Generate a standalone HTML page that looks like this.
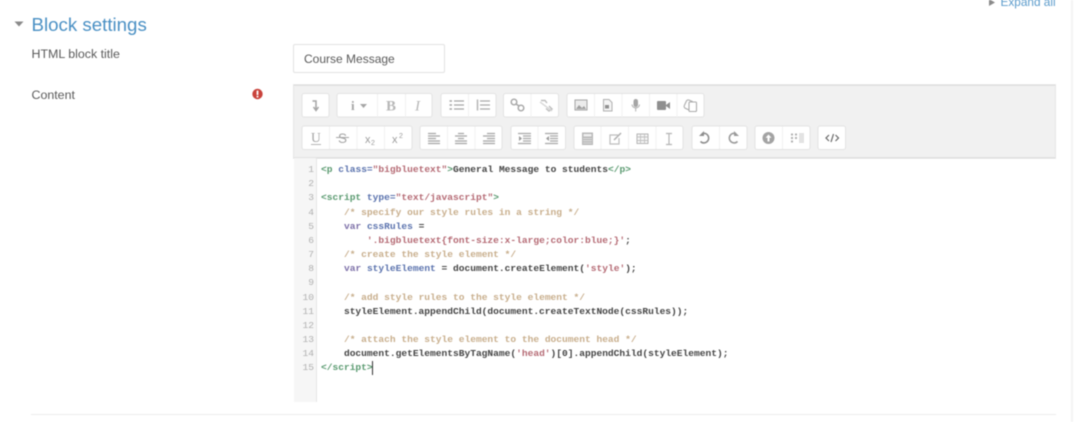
<!DOCTYPE html>
<html>
<head>
<meta charset="utf-8">
<style>
html,body{margin:0;padding:0;background:#fff}
body{width:1080px;height:422px;position:relative;overflow:hidden;font-family:"Liberation Sans",sans-serif;filter:blur(.5px)}
.a{position:absolute;white-space:pre}
.code{position:absolute;left:321px;top:163px;font:bold 9.57px/14.17px "Liberation Mono",monospace;color:#444;white-space:pre}
.nums{position:absolute;left:294px;top:163px;width:20px;text-align:right;font:9.57px/14.17px "Liberation Mono",monospace;color:#b0b0b0;white-space:pre}
.t{color:#5a9a70}.at{color:#5a72ad}.s{color:#b56a74}.c{color:#c8ae8c}.k{color:#7d70a8}.v{color:#5a72ad}
</style>
</head>
<body>
<div class="a" style="left:1071px;top:0;width:2px;height:422px;background:#f3f3f3"></div>

<svg class="a" style="left:14px;top:20.500px" width="11" height="6"><path d="M0.5 0.5H9.5L5 5.5Z" fill="#8a8a8a"/></svg>
<div class="a" style="left:31.5px;top:12.500px;font-size:18.700px;line-height:24px;color:#4a90c4">Block settings</div>
<div class="a" style="left:31.5px;top:45.500px;font-size:12.400px;line-height:17px;color:#5a5a5a">HTML block title</div>
<div class="a" style="left:31.5px;top:86.500px;font-size:12.400px;line-height:17px;color:#5a5a5a">Content</div>
<svg class="a" style="left:252px;top:88px" width="11" height="12"><circle cx="5.5" cy="6" r="5.2" fill="#c9433c"/><rect x="4.6" y="2.6" width="1.8" height="4.4" fill="#fff"/><rect x="4.6" y="7.8" width="1.8" height="1.7" fill="#fff"/></svg>

<svg class="a" style="left:988px;top:0" width="8" height="7"><path d="M1 -1L7 2.5L1 6Z" fill="#8a8a8a"/></svg>
<div class="a" style="left:1000.5px;top:-6px;font-size:11.800px;line-height:16px;color:#5b9bcb">Expand all</div>

<div class="a" style="left:293px;top:44px;width:150px;height:27px;border:1px solid #e2e2e2;border-radius:2px;font-size:12px;line-height:28px;color:#5a5a5a;text-indent:10px">Course Message</div>

<!-- toolbar -->
<svg class="a" style="left:293px;top:84px" width="764" height="76" viewBox="293 84 764 76">
  <rect x="293" y="85" width="763" height="73" fill="#f1f1f1"/>
  <path d="M293 85H1056M293 158H1056" stroke="#d9d9d9" stroke-width="1.2"/>
  <path d="M293.5 85V158M1055.5 85V158" stroke="#e6e6e6"/>
  <g fill="#fff" stroke="#e3e3e3" stroke-width="1">
    <rect x="302" y="93.5" width="27" height="23.5" rx="2"/>
    <rect x="337" y="93.5" width="95" height="23.5" rx="2"/>
    <rect x="441" y="93.5" width="55" height="23.5" rx="2"/>
    <rect x="503.500" y="93.5" width="55" height="23.5" rx="2"/>
    <rect x="567" y="93.5" width="137" height="23.5" rx="2"/>
    <rect x="302" y="126" width="110" height="23.5" rx="2"/>
    <rect x="420" y="126" width="82" height="23.5" rx="2"/>
    <rect x="511" y="126" width="54.500" height="23.5" rx="2"/>
    <rect x="574" y="126" width="109" height="23.5" rx="2"/>
    <rect x="692" y="126" width="55" height="23.5" rx="2"/>
    <rect x="755" y="126" width="55" height="23.5" rx="2"/>
    <rect x="818" y="126" width="27.500" height="23.5" rx="2"/>
  </g>
  <path d="M377.500 94V117M405.500 94V117M468.500 94V117M531 94V117M594.500 94V117M622 94V117M649.500 94V117M677 94V117M329.500 126.500V149M357 126.500V149M384.500 126.500V149M447.500 126.500V149M475 126.500V149M538 126.500V149M601 126.500V149M628.500 126.500V149M656 126.500V149M719.500 126.500V149M782.500 126.500V149" stroke="#f2f2f2" fill="none"/>

  <!-- row 1 -->
  <path d="M312.500 101H316V109M313.500 107L316 110.500L318.500 107" fill="none" stroke="#a5a5a5" stroke-width="1.500"/>
  <text x="351" y="110" font-family="Liberation Serif" font-weight="bold" font-size="13" fill="#a5a5a5">i</text>
  <path d="M360 104H367L363.500 108Z" fill="#a5a5a5"/>
  <text x="386" y="110.500" font-family="Liberation Serif" font-weight="bold" font-size="15" fill="#b8b8b8">B</text>
  <text x="415" y="110.500" font-family="Liberation Serif" font-style="italic" font-size="15" fill="#b8b8b8">I</text>
  <path d="M454 101H464M454 105H464M454 109H464" stroke="#a5a5a5" stroke-width="1.200"/>
  <path d="M449.500 101H452M449.500 105H452M449.500 109H452" stroke="#a5a5a5" stroke-width="1.400"/>
  <path d="M480 101H490M480 105H490M480 109H490" stroke="#a8a8a8" stroke-width="1.200"/>
  <path d="M477.500 99.500V110.500" stroke="#b5b5b5" stroke-width="1.500"/>
  <g fill="none" stroke="#a5a5a5" stroke-width="1.400">
    <circle cx="514" cy="102" r="2.800"/><circle cx="521" cy="108" r="2.800"/><path d="M516 104L519 106"/>
  </g>
  <g fill="none" stroke="#bdbdbd" stroke-width="1.400">
    <path d="M541 100.500L545 100.500L547 103M549 106L552 109L549 111L546 108.500"/>
    <path d="M540 102L552 111" stroke="#d5d5d5"/>
  </g>
  <rect x="575" y="100" width="12" height="10" fill="#ececec" stroke="#a5a5a5"/>
  <path d="M576 109L579 105L582 108L584 106L586 109Z" fill="#a0a0a0"/>
  <path d="M603.500 99.500H609L612 102.500V111H603.500Z" fill="#f4f4f4" stroke="#b0b0b0"/>
  <rect x="605" y="105" width="4" height="3.500" fill="#909090"/>
  <rect x="633.500" y="99" width="4.500" height="8" rx="2.200" fill="#a5a5a5"/>
  <path d="M632 104.500C632 109 639.500 109 639.500 104.500M635.700 108V111.500" fill="none" stroke="#b0b0b0"/>
  <rect x="657" y="101" width="9" height="9" rx="1" fill="#8f8f8f"/>
  <path d="M666 105L670 102V109L666 106Z" fill="#8f8f8f"/>
  <g fill="#fff" stroke="#ababab" stroke-width="1.100">
    <rect x="685" y="100.500" width="7.500" height="9" rx="2" transform="rotate(25 689 105)"/>
    <rect x="689" y="102" width="7.500" height="9.500" rx="1"/>
  </g>

  <!-- row 2 -->
  <text x="311" y="142" font-family="Liberation Serif" font-size="13.500" fill="#a5a5a5">U</text>
  <path d="M311 144.500H321" stroke="#b5b5b5"/>
  <text x="338" y="143" font-family="Liberation Sans" font-size="13.500" fill="#a5a5a5">S</text>
  <path d="M336 137.500H349" stroke="#a5a5a5"/>
  <text x="365" y="143" font-size="11" fill="#9a9a9a">x</text><text x="371" y="145" font-size="7" fill="#9a9a9a">2</text>
  <text x="392" y="143" font-size="11" fill="#9a9a9a">x</text><text x="399" y="138" font-size="7" fill="#9a9a9a">2</text>
  <path d="M428 133.500H436M428 136H440M428 138.500H436M428 141H440M428 143.500H440" stroke="#a5a5a5" stroke-width="1.200"/>
  <path d="M458 133.500H464M455 136H467M458 138.500H464M455 141H467M455 143.500H467" stroke="#a5a5a5" stroke-width="1.200"/>
  <path d="M487 133.500H495M483 136H495M487 138.500H495M483 141H495M483 143.500H495" stroke="#a5a5a5" stroke-width="1.200"/>
  <path d="M518 133.500H531M523 136H531M523 138.500H531M523 141H531M518 143.500H531" stroke="#a8a8a8" stroke-width="1.200"/>
  <path d="M519 136L522 138.500L519 141Z" fill="#9a9a9a"/>
  <path d="M545 133.500H558M550 136H558M550 138.500H558M550 141H558M545 143.500H558" stroke="#a8a8a8" stroke-width="1.200"/>
  <path d="M549 136L546 138.500L549 141Z" fill="#9a9a9a"/>
  <rect x="582" y="132.500" width="11" height="12.500" fill="#b8b8b8"/>
  <rect x="583.500" y="134" width="8" height="2.500" fill="#eee"/>
  <path d="M583 138.500H592M583 140.700H592M583 143H592" stroke="#e5e5e5" stroke-width=".8"/>
  <path d="M618 135H610V144H619V138" fill="none" stroke="#bdbdbd" stroke-width="1.200"/>
  <path d="M614 140L621 133" stroke="#b0b0b0" stroke-width="1.500"/>
  <rect x="637" y="134" width="11" height="9.500" fill="#f6f6f6" stroke="#b5b5b5"/>
  <path d="M637 137H648M637 140.500H648M640.500 134V143.500M644.500 134V143.500" stroke="#c0c0c0" stroke-width=".9"/>
  <path d="M666 133.500H672M666 144.500H672M669 133.500V144.500" stroke="#b5b5b5" stroke-width="1.200"/>
  <path d="M702 133.700A4.800 4.800 0 1 1 700.500 141.500" fill="none" stroke="#8e8e8e" stroke-width="1.600"/>
  <path d="M704 131V136H699Z" fill="#8e8e8e"/>
  <path d="M736 133.700A4.800 4.800 0 1 0 737.500 141.500" fill="none" stroke="#9a9a9a" stroke-width="1.600"/>
  <path d="M734 131V136H739Z" fill="#9a9a9a"/>
  <circle cx="768.500" cy="138" r="6" fill="#a3a3a3"/>
  <path d="M768.500 134.500L771.500 137.800H769.500V141.500H767.500V137.800H765.500Z" fill="#fff"/>
  <g fill="#b0b0b0"><rect x="791" y="133.500" width="2" height="2"/><rect x="795" y="133.500" width="2" height="2"/><rect x="791" y="137" width="2" height="2"/><rect x="795" y="137" width="2" height="2"/><rect x="791" y="140.500" width="2" height="2"/></g>
  <g fill="#e3e3e3"><rect x="799" y="133" width="5" height="10"/></g>
  <path d="M829 135L826 138L829 141M835.500 135L838.500 138L835.500 141M833.500 134L831 142" fill="none" stroke="#666" stroke-width="1.200"/>
</svg>

<!-- gutter -->
<div class="a" style="left:294px;top:158px;width:22px;height:244px;background:#f6f6f6;border-right:1px solid #e6e6e6"></div>
<div class="nums">1
2
3
4
5
6
7
8
9
10
11
12
13
14
15</div>
<div class="code"><span class="t">&lt;p</span> <span class="at">class=</span><span class="s">"bigbluetext"</span><span class="t">&gt;</span>General Message to students<span class="t">&lt;/p&gt;</span>

<span class="t">&lt;script</span> <span class="at">type=</span><span class="s">"text/javascript"</span><span class="t">&gt;</span>
    <span class="c">/* specify our style rules in a string */</span>
    <span class="k">var</span> <span class="v">cssRules</span> =
        <span class="s">'.bigbluetext{font-size:x-large;color:blue;}'</span>;
    <span class="c">/* create the style element */</span>
    <span class="k">var</span> <span class="v">styleElement</span> = document.createElement(<span class="s">'style'</span>);

    <span class="c">/* add style rules to the style element */</span>
    styleElement.appendChild(document.createTextNode(cssRules));

    <span class="c">/* attach the style element to the document head */</span>
    document.getElementsByTagName(<span class="s">'head'</span>)[0].appendChild(styleElement);
<span class="t">&lt;/script&gt;</span></div>
<div class="a" style="left:372px;top:361px;width:1px;height:14px;background:#333"></div>

<div class="a" style="left:31px;top:414px;width:1025px;height:1px;background:#ececec"></div>
</body>
</html>
